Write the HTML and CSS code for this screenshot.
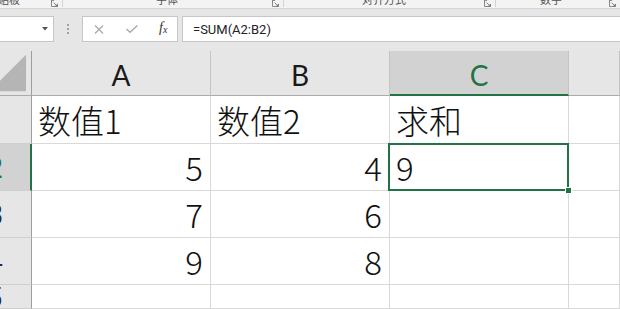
FILE: index.html
```html
<!DOCTYPE html>
<html>
<head>
<meta charset="utf-8">
<link rel="stylesheet" href="styles.css">
</head>
<body>
<div class="ribbon">
  <div class="group g1"><span class="glabel">剪贴板</span><svg class="launch" viewBox="0 0 8 8"><path d="M0.5 3V0.5H3.5M0.5 0.5V7.5H7.5V4.5M3 3L7 7M7 4.5V7H4.5"/></svg></div>
  <div class="group g2"><span class="glabel">字体</span><svg class="launch" viewBox="0 0 8 8"><path d="M0.5 3V0.5H3.5M0.5 0.5V7.5H7.5V4.5M3 3L7 7M7 4.5V7H4.5"/></svg></div>
  <div class="group g3"><span class="glabel">对齐方式</span><svg class="launch" viewBox="0 0 8 8"><path d="M0.5 3V0.5H3.5M0.5 0.5V7.5H7.5V4.5M3 3L7 7M7 4.5V7H4.5"/></svg></div>
  <div class="group g4"><span class="glabel">数字</span><svg class="launch" viewBox="0 0 8 8"><path d="M0.5 3V0.5H3.5M0.5 0.5V7.5H7.5V4.5M3 3L7 7M7 4.5V7H4.5"/></svg></div>
</div>
<div class="toolbar">
  <div class="namebox"><svg class="dd" viewBox="0 0 6 4"><path d="M0 0H6L3 3.5Z"/></svg></div>
  <div class="dots"><i></i><i></i><i></i></div>
  <div class="fxbox">
    <svg class="xicon" viewBox="0 0 10 9"><path d="M1 0.5L9 8.5M9 0.5L1 8.5"/></svg>
    <svg class="chk" viewBox="0 0 12 8"><path d="M0.5 4L4 7.3L11.5 0.5"/></svg>
    <span class="fx">f<sub>x</sub></span>
  </div>
  <div class="formula">=SUM(A2:B2)</div>
</div>
<div class="sheet">
  <div class="corner"><svg class="tri" viewBox="0 0 28 39"><path d="M27 0V38H-11Z"/></svg></div>
  <div class="colh">A</div>
  <div class="colh">B</div>
  <div class="colh sel">C</div>
  <div class="colh"></div>

  <div class="rowh r1"><span>1</span></div>
  <div class="cell txt">数值1</div>
  <div class="cell txt">数值2</div>
  <div class="cell txt">求和</div>
  <div class="cell"></div>

  <div class="rowh sel"><span>2</span></div>
  <div class="cell num">5</div>
  <div class="cell num">4</div>
  <div class="cell txt active">9</div>
  <div class="cell"></div>

  <div class="rowh"><span>3</span></div>
  <div class="cell num">7</div>
  <div class="cell num">6</div>
  <div class="cell"></div>
  <div class="cell"></div>

  <div class="rowh"><span>4</span></div>
  <div class="cell num">9</div>
  <div class="cell num">8</div>
  <div class="cell"></div>
  <div class="cell"></div>

  <div class="rowh"><span>5</span></div>
  <div class="cell"></div>
  <div class="cell"></div>
  <div class="cell"></div>
  <div class="cell"></div>
</div>
</body>
</html>
```
FILE: styles.css
```css
* { box-sizing: border-box; }
html, body {
  margin: 0;
  padding: 0;
  width: 620px;
  height: 309px;
  overflow: hidden;
  background: #e6e6e6;
  font-family: "Noto Sans CJK SC", "Noto Sans", sans-serif;
}

/* ribbon strip (cut off at top) */
.ribbon {
  display: flex;
  height: 9px;
  background: #f3f3f3;
  border-bottom: 1px solid #d5d5d5;
  overflow: hidden;
}
.group {
  display: flex;
  align-items: flex-start;
  border-right: 1px solid #d3d3d3;
  height: 7px;
}
.g1 { width: 63px; }
.g2 { width: 221px; }
.g3 { width: 212px; }
.g4 { flex: 1; border-right: none; }
.glabel {
  font-size: 11px;
  line-height: 11px;
  color: #555;
  margin-top: -6px;
  white-space: nowrap;
}
.g1 .glabel { margin-left: -13px; }
.g2 .glabel { margin-left: 93px; }
.g3 .glabel { margin-left: 78px; }
.g4 .glabel { margin-left: 44px; }
.launch {
  width: 7px;
  height: 7px;
  margin-left: auto;
  margin-right: 4px;
  margin-top: 0;
  fill: none;
  stroke: #777;
  stroke-width: 1;
}

/* formula toolbar */
.toolbar {
  display: flex;
  height: 42px;
  padding: 7px 0 9px;
  background: #e6e6e6;
}
.namebox {
  width: 55px;
  margin-left: -1px;
  background: #fff;
  border: 1px solid #c6c6c6;
  display: flex;
  align-items: center;
  justify-content: flex-end;
  padding-right: 5px;
}
.dd { width: 6px; height: 4px; fill: #555; }
.dots {
  width: 28px;
  display: flex;
  flex-direction: column;
  align-items: center;
  justify-content: center;
  gap: 2px;
}
.dots i {
  display: block;
  width: 2px;
  height: 2px;
  background: #a0a0a0;
}
.fxbox {
  width: 96px;
  background: #fff;
  border: 1px solid #c6c6c6;
  display: flex;
  align-items: center;
  padding-left: 11px;
}
.xicon {
  width: 10px;
  height: 9px;
  fill: none;
  stroke: #a6a6a6;
  stroke-width: 1.1;
}
.chk {
  width: 12px;
  height: 8px;
  margin-left: 22px;
  fill: none;
  stroke: #a6a6a6;
  stroke-width: 1.3;
}
.fx {
  margin-left: 21px;
  font-family: "Liberation Serif", serif;
  font-style: italic;
  font-size: 14px;
  line-height: 14px;
  color: #333;
}
.fx sub {
  font-size: 10px;
  vertical-align: -1px;
}
.formula {
  flex: 1;
  margin-left: 4px;
  margin-right: -1px;
  background: #fff;
  border: 1px solid #c6c6c6;
  padding-left: 10px;
  display: flex;
  align-items: center;
  font-family: Roboto, "Liberation Sans", sans-serif;
  font-size: 13px;
  color: #222;
}

/* sheet grid */
.sheet {
  display: grid;
  grid-template-columns: 32px 179px 179px 179px 1fr;
  grid-template-rows: 45px 48px 47px 47px 47px 1fr;
  height: 258px;
  background: #fff;
}
.corner {
  background: #e6e6e6;
  border-right: 1px solid #9e9e9e;
  border-bottom: 1px solid #ababab;
  display: flex;
  align-items: flex-end;
  justify-content: flex-end;
  padding: 0 4px 2px 0;
}
.tri { width: 28px; height: 39px; fill: #b5b5b5; }
.colh {
  background: #e6e6e6;
  border-right: 1px solid #c4c4c4;
  border-bottom: 1px solid #ababab;
  display: flex;
  align-items: center;
  justify-content: center;
  padding-top: 3px;
  font-family: Lato, "Liberation Sans", sans-serif;
  font-size: 28px;
  color: #1a1a1a;
}
.colh.sel {
  background: #d2d2d2;
  color: #217346;
  border-bottom: 2px solid #217346;
  padding-top: 4px;
}
.rowh {
  background: #e6e6e6;
  border-right: 1px solid #9e9e9e;
  border-bottom: 1px solid #cfcfcf;
  display: flex;
  align-items: center;
  justify-content: flex-end;
  padding-right: 28px;
  overflow: hidden;
  font-family: Lato, "Liberation Sans", sans-serif;
  font-size: 28px;
  color: #1e2a44;
}
.rowh.r1 { padding-right: 30px; }
.rowh.sel {
  background: #d2d2d2;
  color: #217346;
  border-right: 2px solid #217346;
  padding-right: 27px;
}
.cell {
  border-right: 1px solid #d9d9d9;
  border-bottom: 1px solid #d9d9d9;
  display: flex;
  align-items: flex-end;
  padding: 0 7px 6px 6px;
  font-size: 33px;
  font-weight: 300;
  line-height: 1;
  color: #111;
  position: relative;
}
.cell.num { justify-content: flex-end; }
.cell.active::after {
  content: "";
  position: absolute;
  left: -2px;
  top: -1px;
  right: -1px;
  bottom: -1px;
  border: 2px solid #217346;
}
.cell.active::before {
  content: "";
  position: absolute;
  right: -3px;
  bottom: -3px;
  width: 5px;
  height: 5px;
  background: #217346;
  box-shadow: 0 0 0 1px #fff;
  z-index: 2;
}
```
